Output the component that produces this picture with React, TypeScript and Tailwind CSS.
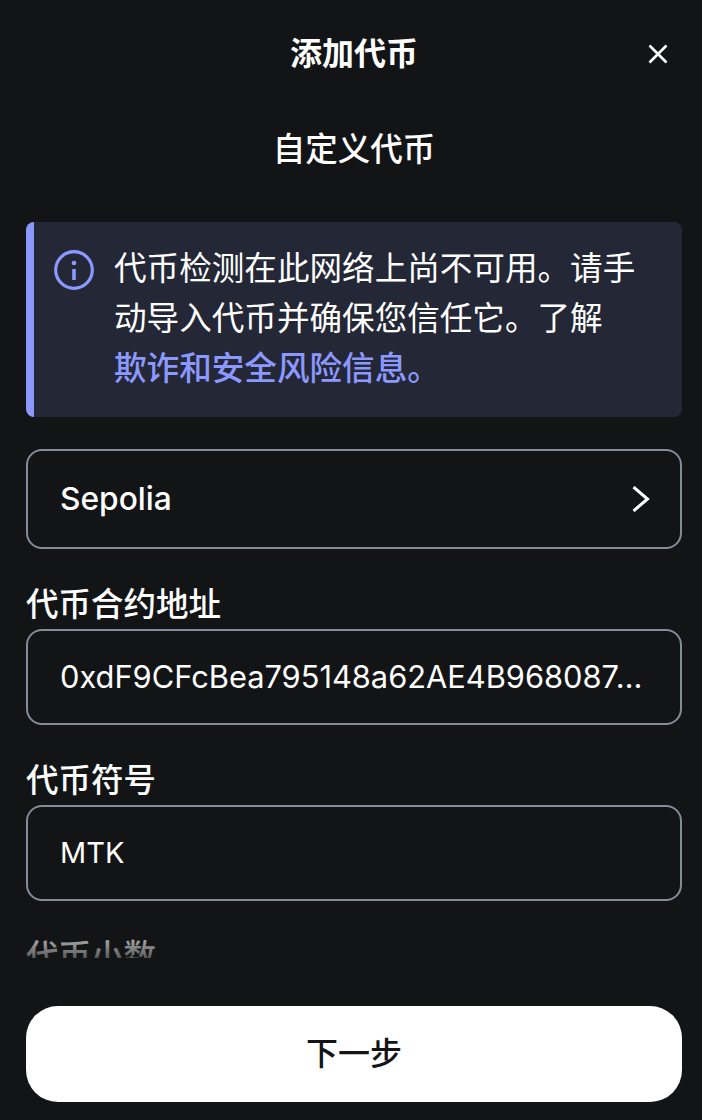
import React from "react";

const font = { fontFamily: '"Inter", "Noto Sans CJK SC", sans-serif' };

const Field = ({ label, value, size }: { label: string; value: string; size: string }) => (
  <div className="flex flex-col">
    <p className="h-[48px] text-[32.5px] leading-[48px] font-medium text-white">{label}</p>
    <div className="flex h-[96px] items-center rounded-[16px] border-2 border-[#858b9a] pr-[34px] pl-[32px]">
      <span className={`w-full truncate text-white ${size}`}>{value}</span>
    </div>
  </div>
);

export default function App() {
  return (
    <div className="flex h-[1120px] w-[702px] flex-col overflow-hidden bg-[#131416] pr-[20px] pl-[26px]" style={font}>
      <div className="relative flex h-[108px] shrink-0 items-center justify-center">
        <h1 className="text-[32px] font-bold text-white">添加代币</h1>
        <svg className="absolute top-[44px] right-[14px] h-[20px] w-[20px]" viewBox="0 0 20 20" fill="none">
          <path d="M1.5 1.5L18.5 18.5M18.5 1.5L1.5 18.5" stroke="#fff" strokeWidth="2.6" />
        </svg>
      </div>
      <div className="flex h-[84px] shrink-0 items-center justify-center">
        <h2 className="text-[32.5px] font-medium text-white">自定义代币</h2>
      </div>

      <div className="relative mt-[30px] h-[736px] shrink-0 overflow-hidden">
        <div className="flex h-[195px] gap-[20px] rounded-[8px] border-l-[8px] border-[#8b99ff] bg-[#242736] pt-[21px] pr-[36px] pl-[20px]">
          <svg className="mt-[7px] h-[40px] w-[40px] shrink-0" viewBox="0 0 40 40" fill="none">
            <circle cx="20" cy="20" r="18.3" stroke="#8b99ff" strokeWidth="3.2" />
            <circle cx="20" cy="13" r="2.3" fill="#8b99ff" />
            <rect x="18.2" y="19" width="3.6" height="11" fill="#8b99ff" />
          </svg>
          <p className="text-[32.6px] leading-[50px] text-white">
            代币检测在此网络上尚不可用。请手动导入代币并确保您信任它。了解
            <span className="inline-block font-medium text-[#8b99ff]">欺诈和安全风险信息。</span>
          </p>
        </div>

        <div className="mt-[32px] flex h-[100px] items-center justify-between rounded-[16px] border-2 border-[#858b9a] pr-[30px] pl-[32px]">
          <span className="text-[31.7px] font-medium text-white">Sepolia</span>
          <svg className="h-[26px] w-[18px]" viewBox="0 0 18 26" fill="none">
            <path d="M1.5 1L15.5 13L1.5 25" stroke="#fff" strokeWidth="3" />
          </svg>
        </div>

        <div className="mt-[32px] flex flex-col gap-[32px]">
          <Field label="代币合约地址" value="0xdF9CFcBea795148a62AE4B968087AbC12d2D3e10" size="text-[30.8px]" />
          <Field label="代币符号" value="MTK" size="text-[29px]" />
          <Field label="代币小数" value="18" size="text-[29px]" />
        </div>

        <div className="absolute inset-x-0 bottom-0 h-[40px] bg-gradient-to-b from-transparent to-[#131416]/70" />
      </div>

      <div className="mt-[48px]">
        <button className="flex h-[96px] w-full items-center justify-center rounded-[32px] bg-white text-[32px] font-medium text-[#131416]">
          下一步
        </button>
      </div>
    </div>
  );
}
